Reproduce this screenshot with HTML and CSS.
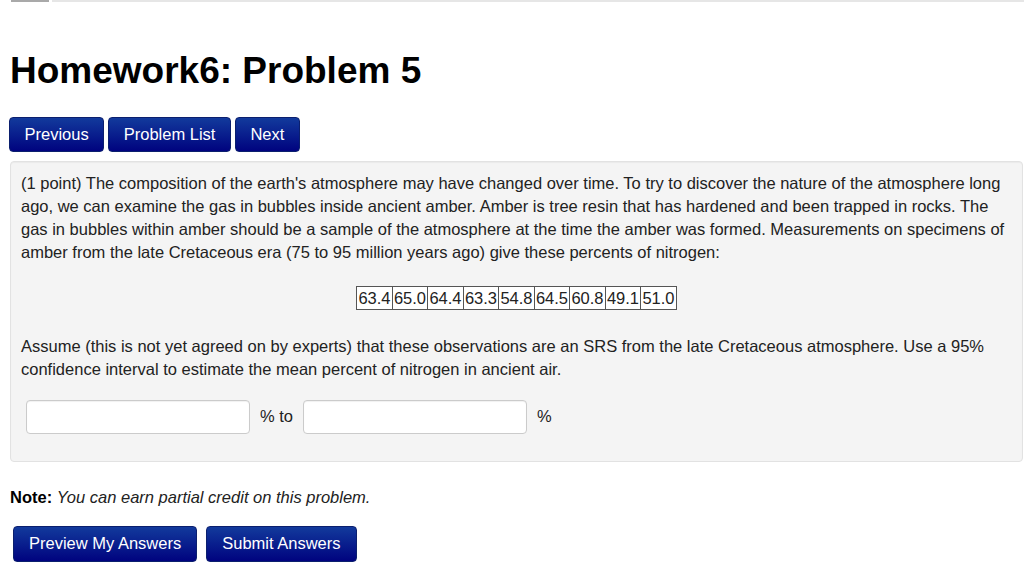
FILE: index.html
```html
<!DOCTYPE html>
<html lang="en">
<head>
    <meta charset="UTF-8">
    <title>Homework6: Problem 5</title>
    <link rel="stylesheet" href="styles.css">
</head>
<body>
    <div class="topstrip">
        <span class="tab"></span>
        <span class="rule"></span>
    </div>
    <div class="page">
        <h1>Homework6: Problem 5</h1>
        <div class="nav">
            <a class="btn" href="#">Previous</a>
            <a class="btn" href="#">Problem List</a>
            <a class="btn" href="#">Next</a>
        </div>
        <div class="well">
            <p>(1 point) The composition of the earth's atmosphere may have changed over time. To try to discover the nature of the atmosphere long ago, we can examine the gas in bubbles inside ancient amber. Amber is tree resin that has hardened and been trapped in rocks. The gas in bubbles within amber should be a sample of the atmosphere at the time the amber was formed. Measurements on specimens of amber from the late Cretaceous era (75 to 95 million years ago) give these percents of nitrogen:</p>
            <table class="data">
                <tr>
                    <td>63.4</td><td>65.0</td><td>64.4</td><td>63.3</td><td>54.8</td><td>64.5</td><td>60.8</td><td>49.1</td><td>51.0</td>
                </tr>
            </table>
            <p>Assume (this is not yet agreed on by experts) that these observations are an SRS from the late Cretaceous atmosphere. Use a 95% confidence interval to estimate the mean percent of nitrogen in ancient air.</p>
            <div class="answer">
                <input type="text" class="field">
                <span>% to</span>
                <input type="text" class="field">
                <span>%</span>
            </div>
        </div>
        <p class="note"><b>Note:</b> <i>You can earn partial credit on this problem.</i></p>
        <div class="submit">
            <a class="btn" href="#">Preview My Answers</a>
            <a class="btn" href="#">Submit Answers</a>
        </div>
    </div>
</body>
</html>
```

FILE: styles.css
```css
*{
    box-sizing: border-box;
}
body{
    margin: 0;
    font-family: "Liberation Sans", Arial, sans-serif;
    font-size: 16.5px;
    color: #222;
    background: #fff;
}
.topstrip{
    display: flex;
    height: 3px;
    padding-left: 11px;
    gap: 3px;
}
.topstrip .tab{
    width: 38px;
    height: 2px;
    background: #a9a9a9;
}
.topstrip .rule{
    flex: 1;
    height: 2px;
    background: #e6e6e6;
}
.page{
    padding: 0 1px 0 10px;
}
h1{
    margin: 46px 0 0;
    font-size: 37px;
    line-height: 44px;
    font-weight: bold;
    color: #000;
}
.btn{
    display: inline-flex;
    align-items: center;
    height: 35px;
    padding: 0 15px;
    font-size: 16.5px;
    color: #fff;
    text-decoration: none;
    background: linear-gradient(to bottom, #123a9c, #00037f);
    border: 1px solid #0b1f6e;
    border-radius: 4px;
}
.nav{
    display: flex;
    gap: 4px;
    margin-top: 24px;
}
.nav .btn{
    padding: 0 14.5px;
}
.nav .btn:first-child{
    margin-left: -1px;
}
.well{
    margin-top: 9px;
    padding: 10px 10px 27px;
    background: #f4f4f4;
    border: 1px solid #e2e2e2;
    border-radius: 4px;
    box-shadow: inset 0 1px 1px rgba(0,0,0,0.04);
}
.well p{
    margin: 0;
    line-height: 23.1px;
}
.data{
    margin: 22px auto 25px;
    border-collapse: collapse;
    background: #fff;
}
.data td{
    border: 1px solid #555;
    padding: 0 1.2px;
    height: 23px;
    font-size: 16.5px;
    color: #222;
}
.answer{
    display: flex;
    align-items: center;
    gap: 10px;
    margin: 18px 0 0 5px;
}
.field{
    width: 224px;
    height: 34px;
    margin: 0;
    background: #fff;
    border: 1px solid #cbcbcb;
    border-radius: 4px;
    box-shadow: inset 0 1px 1px rgba(0,0,0,0.06);
}
.note{
    margin: 24px 0 0;
    line-height: 23px;
}
.note b{
    color: #000;
}
.submit{
    display: flex;
    gap: 9px;
    margin: 17px 0 0 3px;
}
.submit .btn{
    height: 36px;
}
```
